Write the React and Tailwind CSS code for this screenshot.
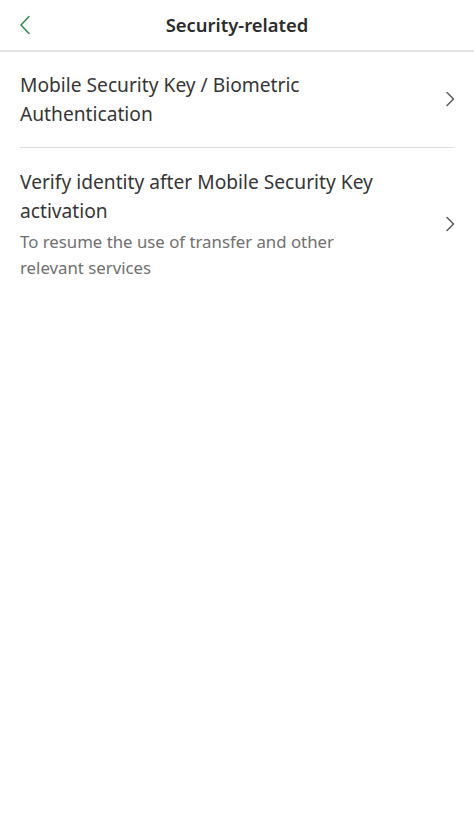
import React from 'react'

const Chevron = ({ className }) => (
  <svg viewBox="0 0 10 16" className={className} fill="none" stroke="currentColor" strokeWidth="1.4" strokeLinecap="round" strokeLinejoin="round">
    <path d="M2 1.5 L8.5 8 L2 14.5" />
  </svg>
)

const items = [
  { title: 'Mobile Security Key / Biometric Authentication' },
  {
    title: 'Verify identity after Mobile Security Key activation',
    sub: 'To resume the use of transfer and other relevant services',
  },
]

export default function App() {
  return (
    <div className="min-h-screen w-full bg-white" style={{ fontFamily: '"Noto Sans", "Open Sans", sans-serif' }}>
      {/* Header */}
      <div className="relative flex h-[52px] items-center justify-center border-b-2 border-[#e3e3e3]">
        <button className="absolute left-[19px] top-[15px] text-[#2e8b4f]">
          <svg viewBox="0 0 12 20" className="h-[20px] w-[12px]" fill="none" stroke="currentColor" strokeWidth="1.5" strokeLinecap="round" strokeLinejoin="round">
            <path d="M10 1.5 L2 10 L10 18.5" />
          </svg>
        </button>
        <h1 className="text-[18.4px] font-semibold text-[#2b2b2b]">Security-related</h1>
      </div>

      <div className="px-[20px]">
        {items.map((it, i) => (
          <div
            key={i}
            className={`flex items-center justify-between ${i === 0 ? 'border-b border-[#dedede] pt-[18px] pb-[19px]' : 'pt-[19px] pb-[18px]'}`}
          >
            <div className="pr-[50px]">
              <div className="text-[19.2px] leading-[29px] text-[#363636]">{it.title}</div>
              {it.sub && (
                <div className="mt-[4px] text-[16.8px] leading-[26px] text-[#707070]">{it.sub}</div>
              )}
            </div>
            <Chevron className="mr-[-1px] h-[16px] w-[10px] shrink-0 text-[#555555]" />
          </div>
        ))}
      </div>
    </div>
  )
}
